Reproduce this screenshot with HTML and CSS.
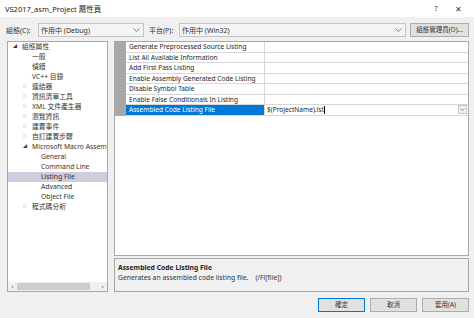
FILE: index.html
```html
<!DOCTYPE html>
<html lang="zh-Hant">
<head>
    <meta charset="UTF-8">
    <title>VS2017_asm_Project 屬性頁</title>
    <link rel="stylesheet" href="styles.css">
</head>
<body>
    <div class="titlebar">
        <span class="title">VS2017_asm_Project 屬性頁</span>
        <span class="tb-btn">?</span>
        <span class="tb-btn close">✕</span>
    </div>

    <div class="toolbar">
        <span class="label">組態(C):</span>
        <div class="combo combo-config">
            <span>作用中 (Debug)</span>
            <svg class="chev" width="7" height="4" viewBox="0 0 7 4"><path d="M0.5 0.5 L3.5 3.5 L6.5 0.5" fill="none" stroke="#606060" stroke-width="0.8"/></svg>
        </div>
        <span class="label label-platform">平台(P):</span>
        <div class="combo combo-platform">
            <span>作用中 (Win32)</span>
            <svg class="chev" width="7" height="4" viewBox="0 0 7 4"><path d="M0.5 0.5 L3.5 3.5 L6.5 0.5" fill="none" stroke="#606060" stroke-width="0.8"/></svg>
        </div>
        <button class="btn btn-manager">組態管理員(O)...</button>
    </div>

    <div class="main">
        <div class="tree">
            <ul class="tree-list">
                <li class="lvl0"><span class="arrow open">◢</span>組態屬性</li>
                <li class="lvl1">一般</li>
                <li class="lvl1">偵錯</li>
                <li class="lvl1">VC++ 目錄</li>
                <li class="lvl1"><span class="arrow">▷</span>連結器</li>
                <li class="lvl1"><span class="arrow">▷</span>資訊清單工具</li>
                <li class="lvl1"><span class="arrow">▷</span>XML 文件產生器</li>
                <li class="lvl1"><span class="arrow">▷</span>瀏覽資訊</li>
                <li class="lvl1"><span class="arrow">▷</span>建置事件</li>
                <li class="lvl1"><span class="arrow">▷</span>自訂建置步驟</li>
                <li class="lvl1"><span class="arrow open">◢</span>Microsoft Macro Assembler</li>
                <li class="lvl2">General</li>
                <li class="lvl2">Command Line</li>
                <li class="lvl2 selected">Listing File</li>
                <li class="lvl2">Advanced</li>
                <li class="lvl2">Object File</li>
                <li class="lvl1"><span class="arrow">▷</span>程式碼分析</li>
            </ul>
            <div class="hscroll">
                <span class="sc-arrow">‹</span>
                <div class="sc-track"><div class="sc-thumb"></div></div>
                <span class="sc-arrow">›</span>
            </div>
        </div>

        <div class="right">
            <div class="grid">
                <div class="row"><div class="gutter"></div><div class="name">Generate Preprocessed Source Listing</div><div class="value"></div></div>
                <div class="row"><div class="gutter"></div><div class="name">List All Available Information</div><div class="value"></div></div>
                <div class="row"><div class="gutter"></div><div class="name">Add First Pass Listing</div><div class="value"></div></div>
                <div class="row"><div class="gutter"></div><div class="name">Enable Assembly Generated Code Listing</div><div class="value"></div></div>
                <div class="row"><div class="gutter"></div><div class="name">Disable Symbol Table</div><div class="value"></div></div>
                <div class="row"><div class="gutter"></div><div class="name">Enable False Conditionals In Listing</div><div class="value"></div></div>
                <div class="row active">
                    <div class="gutter"></div>
                    <div class="name">Assembled Code Listing File</div>
                    <div class="value">
                        <span>$(ProjectName).lst</span><span class="caret"></span>
                        <span class="dd">
                            <svg width="5" height="3" viewBox="0 0 5 3"><path d="M0.5 0.5 L2.5 2.5 L4.5 0.5" fill="none" stroke="#606060" stroke-width="0.7"/></svg>
                        </span>
                    </div>
                </div>
            </div>
            <div class="desc">
                <div class="desc-title">Assembled Code Listing File</div>
                <div class="desc-text">Generates an assembled code listing file.&nbsp;&nbsp;&nbsp;&nbsp;(/Fl[file])</div>
            </div>
        </div>
    </div>

    <div class="buttons">
        <button class="btn default">確定</button>
        <button class="btn">取消</button>
        <button class="btn">套用(A)</button>
    </div>
</body>
</html>
```

FILE: styles.css
```css
body {
    margin: 0;
    width: 474px;
    height: 318px;
    overflow: hidden;
    background-color: #f0f0f0;
    font-family: "Noto Sans", "Noto Sans CJK TC", sans-serif;
    font-size: 7px;
    color: #1e1e1e;
}

.titlebar {
    height: 17px;
    background-color: #fff;
    display: flex;
    align-items: center;
    padding-left: 5px;
    font-size: 7.5px;
}

.title { flex: 1; color: #222; }

.tb-btn {
    width: 22px;
    text-align: center;
    font-size: 7px;
    color: #333;
}

.close { margin-right: 5px; font-size: 8px; }

.toolbar {
    height: 14px;
    margin-top: 6px;
    display: flex;
    align-items: center;
    padding-left: 6px;
}

.label { width: 32px; color: #333; }
.label-platform { width: 30px; margin-left: 5px; }

.combo {
    height: 12px;
    border: 1px solid #c4c4c4;
    background-color: #f4f4f4;
    display: flex;
    align-items: center;
    padding-left: 2px;
    color: #333;
}

.combo span { flex: 1; }
.combo .chev { margin-right: 3px; }

.combo-config { width: 102px; }
.combo-platform { width: 223px; }

.btn {
    font-family: inherit;
    font-size: 6.5px;
    color: #333;
    background-color: #e1e1e1;
    border: 1px solid #adadad;
    height: 14px;
    padding: 0;
    line-height: 12px;
}

.btn-manager { width: 59px; margin-left: 4px; }

.main {
    display: flex;
    margin-top: 4px;
    padding-left: 7px;
    height: 251px;
}

.tree {
    width: 99px;
    border: 1px solid #a8a8a8;
    background-color: #fff;
    display: flex;
    flex-direction: column;
}

.tree-list {
    list-style: none;
    margin: 0;
    padding: 0;
    flex: 1;
    overflow: hidden;
    font-size: 6.8px;
}

.tree-list li {
    height: 10px;
    line-height: 10px;
    white-space: nowrap;
    overflow: hidden;
    color: #333;
}

.lvl0 { padding-left: 14px; }
.lvl1 { padding-left: 24px; }
.lvl2 { padding-left: 33px; }

.arrow {
    display: inline-block;
    width: 9px;
    margin-left: -9px;
    font-size: 4px;
    color: #555;
    vertical-align: top;
}

.arrow.open { color: #333; }

.tree-list li.selected { background-color: #cdcdde; }

.hscroll {
    height: 9px;
    display: flex;
    align-items: center;
    background-color: #f0f0f0;
}

.sc-arrow {
    width: 9px;
    text-align: center;
    font-size: 7px;
    color: #606060;
    line-height: 9px;
}

.sc-track { flex: 1; height: 9px; }

.sc-thumb {
    width: 73px;
    height: 7px;
    margin-top: 1px;
    background-color: #cdcdcd;
}

.right {
    width: 355px;
    margin-left: 6px;
    display: flex;
    flex-direction: column;
}

.grid {
    height: 214px;
    border: 1px solid #a8a8a8;
    background-color: #fff;
    font-size: 6.6px;
}

.row {
    display: flex;
    height: 9.5px;
    border-bottom: 1px solid #d8d8d8;
    line-height: 9.5px;
}

.gutter {
    width: 11px;
    background-color: #a7a7a7;
    border-bottom: 1px solid #a7a7a7;
    margin-bottom: -1px;
}

.name {
    width: 135px;
    padding-left: 3px;
    border-right: 1px solid #d8d8d8;
    white-space: nowrap;
    overflow: hidden;
    color: #1e1e1e;
}

.value {
    flex: 1;
    display: flex;
    align-items: center;
    padding-left: 2px;
    position: relative;
}

.row.active .name {
    background-color: #0078d7;
    color: #fff;
}

.caret {
    width: 1px;
    height: 8px;
    background-color: #000;
}

.dd {
    position: absolute;
    right: 1px;
    top: 0;
    width: 9px;
    height: 9px;
    border: 1px solid #c8c8c8;
    background-color: #f0f0f0;
    display: flex;
    align-items: center;
    justify-content: center;
    box-sizing: border-box;
}

.desc {
    margin-top: 2px;
    height: 34px;
    border: 1px solid #a8a8a8;
    background-color: #f0f0f0;
    padding: 4px 0 0 3px;
    box-sizing: border-box;
    font-size: 6.8px;
}

.desc-title { font-weight: bold; line-height: 10px; color: #222; }
.desc-text { line-height: 10px; color: #333; }

.buttons {
    display: flex;
    justify-content: flex-end;
    gap: 5px;
    padding-right: 5px;
    margin-top: 6px;
}

.buttons .btn { width: 47px; }
.buttons .btn.default { border-color: #0078d7; }
```
